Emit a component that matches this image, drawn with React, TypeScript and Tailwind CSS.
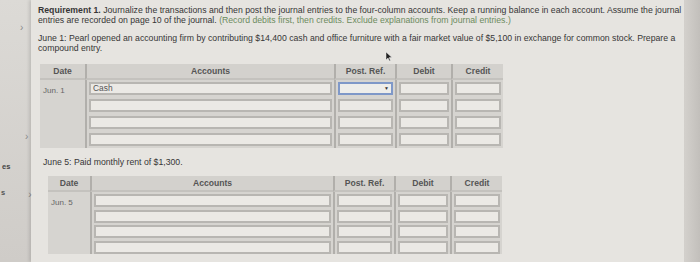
import type { JSX } from 'react';

type JournalProps = {
  date: string;
  firstAccount?: string;
  withSelect?: boolean;
  dateWidth: number;
  accountsWidth: number;
  rowPad: string;
};

const Field = ({ pad, children }: { pad: string; children?: React.ReactNode }): JSX.Element => (
  <div className={`px-[2px] ${pad}`}>
    <div className="flex h-[13px] items-center border-2 border-[#b8b6b2] bg-[#ebe9e5] px-[2px] text-[8.4px] text-[#555]">
      {children}
    </div>
  </div>
);

const SelectField = ({ pad }: { pad: string }): JSX.Element => (
  <div className={`px-[2px] ${pad}`}>
    <div className="flex h-[13px] items-center justify-end border-2 border-[#7f98c8] bg-[#eeedea] pr-[2px]">
      <span className="text-[5px] leading-none text-[#333]">▼</span>
    </div>
  </div>
);

const JournalTable = ({
  date,
  firstAccount,
  withSelect,
  dateWidth,
  accountsWidth,
  rowPad,
}: JournalProps): JSX.Element => {
  const rows = [0, 1, 2, 3];
  return (
    <div
      className="grid w-fit bg-[#d6d4d0]"
      style={{
        gridTemplateColumns: `${dateWidth}px ${accountsWidth}px 61px 56px 52px`,
      }}
    >
      {['Date', 'Accounts', 'Post. Ref.', 'Debit', 'Credit'].map((h, i) => (
        <div
          key={h}
          className={`flex h-[16px] items-center justify-center border-b-2 border-[#c4c2be] bg-[#d3d1cd] text-[8.6px] font-bold text-[#555] ${
            i > 0 ? 'border-l-2 border-l-[#b1afab]' : ''
          }`}
        >
          {h}
        </div>
      ))}
      <div className="row-span-4 pl-[3px] pt-[5px] text-[8px] text-[#666]">
        {date}
      </div>
      {rows.map((r) => (
        <div key={r} className="contents">
          <div className="border-l-2 border-[#b1afab]">
            <Field pad={rowPad}>{r === 0 ? firstAccount : null}</Field>
          </div>
          <div className="border-l-2 border-[#b1afab]">
            {r === 0 && withSelect ? <SelectField pad={rowPad} /> : <Field pad={rowPad} />}
          </div>
          <div className="border-l-2 border-[#b1afab]">
            <Field pad={rowPad} />
          </div>
          <div className="border-l-2 border-[#b1afab]">
            <Field pad={rowPad} />
          </div>
        </div>
      ))}
    </div>
  );
};

const Pointer = (): JSX.Element => (
  <svg width="8" height="11" viewBox="0 0 8 11" className="absolute left-[354px] top-[51px]">
    <path d="M1 1 L1 9 L3 7 L4.5 10 L5.5 9.5 L4.2 6.6 L7 6.6 Z" fill="#222" stroke="#eee" strokeWidth="0.5" />
  </svg>
);

export default function App(): JSX.Element {
  return (
    <div
      className="flex h-[262px] w-[700px] overflow-hidden bg-[#e6e4e0] text-[#363636]"
      style={{ fontFamily: '"Liberation Sans", Arial, sans-serif' }}
    >
      {/* side navigation strip */}
      <aside className="flex w-[31px] shrink-0 flex-col bg-gradient-to-b from-[#dcdad6] to-[#cfccc8] text-[#8a8a8a]">
        <span className="ml-[20px] mt-[23px] text-[10px] leading-none">›</span>
        <span className="ml-[25px] mt-[99px] text-[10px] leading-none">›</span>
        <span className="ml-[2px] mt-[21px] text-[7.5px] font-bold leading-none text-[#444]">es</span>
        <div className="mt-[15px] flex items-center">
          <span className="ml-[1px] text-[7.5px] font-bold leading-none text-[#555]">s</span>
          <span className="ml-[23px] mt-[4px] text-[10px] leading-none">›</span>
        </div>
      </aside>

      <main className="relative flex-1 pl-[7px] pt-[5px] shadow-[-2px_0_3px_rgba(0,0,0,0.12)]">
        <p className="text-[8.7px] leading-[10px]">
          <b>Requirement 1.</b> Journalize the transactions and then post the journal entries
          to the four-column accounts. Keep a running balance in each account. Assume the journal
          entries are recorded on page 10 of the journal.{' '}
          <span className="text-[#6c8b5e]">
            (Record debits first, then credits. Exclude explanations from journal entries.)
          </span>
        </p>
        <p className="mt-[8px] pr-[2px] text-[8.7px] leading-[10px]">
          June 1: Pearl opened an accounting firm by contributing $14,400 cash and office furniture
          with a fair market value of $5,100 in exchange for common stock. Prepare a compound entry.
        </p>
        <Pointer />
        <div className="ml-[2px] mt-[11px]">
          <JournalTable
            date="Jun. 1"
            firstAccount="Cash"
            withSelect
            dateWidth={45}
            accountsWidth={249}
            rowPad="py-[2px]"
          />
        </div>
        <p className="ml-[5px] mt-[9px] text-[8.7px] leading-[10px]">June 5: Paid monthly rent of $1,300.</p>
        <div className="ml-[10px] mt-[9px]">
          <JournalTable
            date="Jun. 5"
            dateWidth={42}
            accountsWidth={243}
            rowPad="pt-[2px] pb-[0.5px]"
          />
        </div>
      </main>

      <div className="w-[16px] shrink-0 bg-gradient-to-r from-[#d4d1cd] to-[#c2bfbb]" />
    </div>
  );
}
